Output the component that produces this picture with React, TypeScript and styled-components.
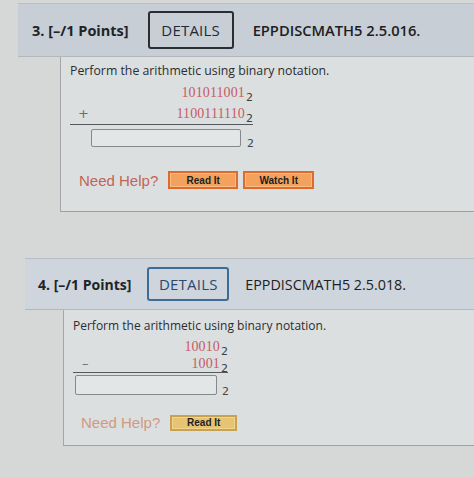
import React from 'react';
import styled, { createGlobalStyle } from 'styled-components';

const Global = createGlobalStyle`
  html, body { margin: 0; padding: 0; background: #d6d8d7; }
  body { width: 474px; height: 477px; overflow: hidden; font-family: "Open Sans", "DejaVu Sans", sans-serif; color: #222; }
  #root { width: 474px; }
`;

const Page = styled.div`
  display: flex;
  flex-direction: column;
  padding-top: 3px;
`;

const Question = styled.section<{ $indent: number; $gap: number }>`
  margin-left: ${p => p.$indent}px;
  margin-top: ${p => p.$gap}px;
  display: flex;
  flex-direction: column;
`;

const Header = styled.header<{ $h: number; $bg: string; $pl: number; $gap: number }>`
  height: ${p => p.$h}px;
  background: ${p => p.$bg};
  border-top: 1px solid #b9bfc4;
  border-bottom: 1px solid #b3b8bc;
  box-sizing: border-box;
  display: flex;
  align-items: center;
  padding-left: ${p => p.$pl}px;
  gap: ${p => p.$gap}px;
`;

const Points = styled.span<{ $size: number }>`
  font-size: ${p => p.$size}px;
  font-weight: 700;
  color: #202428;
  white-space: nowrap;
`;

const Details = styled.div<{ $w: number; $h: number; $border: string; $color: string }>`
  width: ${p => p.$w}px;
  height: ${p => p.$h}px;
  box-sizing: border-box;
  border: 2px solid ${p => p.$border};
  border-radius: 3px;
  display: flex;
  align-items: center;
  justify-content: center;
  font-size: 15px;
  font-weight: 500;
  color: ${p => p.$color};
  letter-spacing: 0.2px;
`;

const Code = styled.span<{ $size: number; $weight: number }>`
  font-size: ${p => p.$size}px;
  font-weight: ${p => p.$weight};
  color: #1c2024;
  white-space: nowrap;
`;

const Panel = styled.div<{ $ml: number; $pt: number; $pb: number }>`
  margin-left: ${p => p.$ml}px;
  background: #dcdfdf;
  border-left: 1px solid #a3a7a9;
  border-bottom: 1px solid #9da1a3;
  padding: ${p => p.$pt}px 0 ${p => p.$pb}px 9px;
  display: flex;
  flex-direction: column;
`;

const Prompt = styled.p<{ $size: number }>`
  margin: 0;
  font-size: ${p => p.$size}px;
  line-height: 18px;
  color: #2a2d30;
  white-space: nowrap;
`;

const Sum = styled.div<{ $w: number; $mt: number }>`
  width: ${p => p.$w}px;
  margin-top: ${p => p.$mt}px;
  display: flex;
  flex-direction: column;
`;

const Row = styled.div<{ $h: number; $rule?: boolean }>`
  height: ${p => p.$h}px;
  display: flex;
  align-items: center;
  justify-content: space-between;
  border-bottom: ${p => (p.$rule ? '1px solid #55595c' : 'none')};
`;

const Op = styled.span<{ $pl: number }>`
  padding-left: ${p => p.$pl}px;
  font-size: 13px;
  color: #6a6e72;
  font-family: "DejaVu Sans", sans-serif;
`;

const Num = styled.span`
  font-family: "Liberation Serif", "Times New Roman", serif;
  font-size: 14px;
  color: #c65a66;
  letter-spacing: 0.1px;
  display: inline-flex;
  align-items: baseline;
`;

const Sub = styled.sub`
  font-family: "DejaVu Sans", sans-serif;
  font-size: 11px;
  color: #3c4044;
  position: relative;
  top: 4px;
  margin-left: 1px;
  vertical-align: baseline;
`;

const AnswerRow = styled.div<{ $mt: number; $ml: number; $gap: number }>`
  margin-top: ${p => p.$mt}px;
  margin-left: ${p => p.$ml}px;
  display: flex;
  align-items: flex-end;
  gap: ${p => p.$gap}px;
`;

const Answer = styled.input<{ $w: number; $h: number }>`
  width: ${p => p.$w}px;
  height: ${p => p.$h}px;
  box-sizing: border-box;
  border: 1px solid #85898c;
  border-radius: 2px;
  background: #e3e6e6;
  margin: 0;
  padding: 0;
`;

const Base = styled.span`
  font-family: "DejaVu Sans", sans-serif;
  font-size: 11px;
  color: #44484c;
  line-height: 10px;
  margin-bottom: -2px;
`;

const HelpRow = styled.div<{ $mt: number; $ml: number }>`
  margin-top: ${p => p.$mt}px;
  margin-left: ${p => p.$ml}px;
  display: flex;
  align-items: center;
  gap: 5px;
`;

const NeedHelp = styled.span<{ $color: string }>`
  font-family: "Liberation Sans", Arial, sans-serif;
  font-size: 15px;
  color: ${p => p.$color};
  margin-right: 5px;
  white-space: nowrap;
`;

const HelpButton = styled.button<{ $w: number; $h: number; $bg: string; $edge: string; $inner: string }>`
  width: ${p => p.$w}px;
  height: ${p => p.$h}px;
  box-sizing: border-box;
  background: ${p => p.$bg};
  border: 2px solid ${p => p.$edge};
  box-shadow: inset 0 0 0 1px ${p => p.$inner};
  font-family: "Liberation Sans", Arial, sans-serif;
  font-weight: 700;
  font-size: 10px;
  color: #1e1e1e;
  padding: 0;
  display: flex;
  align-items: center;
  justify-content: center;
`;

export default function App() {
  return (
    <>
      <Global />
      <Page>
        <Question $indent={18} $gap={0}>
          <Header $h={54} $bg="#c7ced5" $pl={14} $gap={19}>
            <Points $size={14.5}>3. [–/1 Points]</Points>
            <Details $w={86} $h={38} $border="#2a2e33" $color="#1f2a38">DETAILS</Details>
            <Code $size={14.7} $weight={600}>EPPDISCMATH5 2.5.016.</Code>
          </Header>
          <Panel $ml={42} $pt={5} $pb={22}>
            <Prompt $size={12.3}>Perform the arithmetic using binary notation.</Prompt>
            <Sum $w={183} $mt={2}>
              <Row $h={21}>
                <span />
                <Num>101011001<Sub>2</Sub></Num>
              </Row>
              <Row $h={21} $rule>
                <Op $pl={8}>+</Op>
                <Num>1100111110<Sub>2</Sub></Num>
              </Row>
            </Sum>
            <AnswerRow $mt={4} $ml={21} $gap={6}>
              <Answer $w={150} $h={18} aria-label="answer" />
              <Base>2</Base>
            </AnswerRow>
            <HelpRow $mt={24} $ml={9}>
              <NeedHelp $color="#c06656">Need Help?</NeedHelp>
              <HelpButton $w={70} $h={18} $bg="#f2a25c" $edge="#e06a2c" $inner="#f6bd85">Read It</HelpButton>
              <HelpButton $w={71} $h={18} $bg="#f2a25c" $edge="#e06a2c" $inner="#f6bd85">Watch It</HelpButton>
            </HelpRow>
          </Panel>
        </Question>

        <Question $indent={25} $gap={46}>
          <Header $h={52} $bg="#ced5dc" $pl={13} $gap={16}>
            <Points $size={14}>4. [–/1 Points]</Points>
            <Details $w={82} $h={34} $border="#3d6c96" $color="#2b4a6e">DETAILS</Details>
            <Code $size={14.3} $weight={500}>EPPDISCMATH5 2.5.018.</Code>
          </Header>
          <Panel $ml={38} $pt={7} $pb={14}>
            <Prompt $size={12}>Perform the arithmetic using binary notation.</Prompt>
            <Sum $w={155} $mt={3}>
              <Row $h={17}>
                <span />
                <Num>10010<Sub>2</Sub></Num>
              </Row>
              <Row $h={17} $rule>
                <Op $pl={9}>–</Op>
                <Num>1001<Sub>2</Sub></Num>
              </Row>
            </Sum>
            <AnswerRow $mt={2} $ml={2} $gap={5}>
              <Answer $w={142} $h={20} aria-label="answer" />
              <Base>2</Base>
            </AnswerRow>
            <HelpRow $mt={19} $ml={8}>
              <NeedHelp $color="#d09a82">Need Help?</NeedHelp>
              <HelpButton $w={67} $h={16} $bg="#e6c473" $edge="#c9a250" $inner="#efd593">Read It</HelpButton>
            </HelpRow>
          </Panel>
        </Question>
      </Page>
    </>
  );
}
